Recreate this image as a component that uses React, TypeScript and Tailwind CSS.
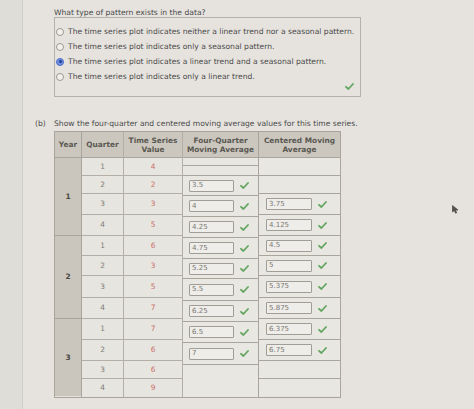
import React from "react";

const options = [
  "The time series plot indicates neither a linear trend nor a seasonal pattern.",
  "The time series plot indicates only a seasonal pattern.",
  "The time series plot indicates a linear trend and a seasonal pattern.",
  "The time series plot indicates only a linear trend.",
];

// quarter rows, top to bottom
const rows = [
  { q: 1, v: 4, h: 18, cma: "" },
  { q: 2, v: 2, h: 18, cma: "" },
  { q: 3, v: 3, h: 21, cma: "3.75" },
  { q: 4, v: 5, h: 21, cma: "4.125" },
  { q: 1, v: 6, h: 20, cma: "4.5" },
  { q: 2, v: 3, h: 20, cma: "5" },
  { q: 3, v: 5, h: 22, cma: "5.375" },
  { q: 4, v: 7, h: 21, cma: "5.875" },
  { q: 1, v: 7, h: 21, cma: "6.375" },
  { q: 2, v: 6, h: 21, cma: "6.75" },
  { q: 3, v: 6, h: 18, cma: "" },
  { q: 4, v: 9, h: 17, cma: "" },
];

// four-quarter column sits between the quarter rows
const fourQ = [
  { h: 8, val: "" },
  { h: 10, val: "" },
  { h: 20, val: "3.5" },
  { h: 21, val: "4" },
  { h: 21, val: "4.25" },
  { h: 21, val: "4.75" },
  { h: 20, val: "5.25" },
  { h: 22, val: "5.5" },
  { h: 21, val: "6.25" },
  { h: 21, val: "6.5" },
  { h: 22, val: "7" },
  { h: 32, val: "" },
];

const years = [
  { y: 1, h: 78 },
  { y: 2, h: 83 },
  { y: 3, h: 77 },
];

const Check = ({ className = "" }: { className?: string }) => (
  <svg width="9" height="7" viewBox="0 0 9 7" className={className}>
    <path d="M1 3.8 L3.4 6 L8 1" fill="none" stroke="#62a660" strokeWidth="1.8" strokeLinecap="round" strokeLinejoin="round" />
  </svg>
);

const Answer = ({ val, w }: { val: string; w: string }) => (
  <div className="flex items-center gap-[6px]">
    <div className={`${w} h-[12px] border border-[#a09d97] bg-[#eeede9] rounded-[1px] flex items-center pl-[2px] text-[7px] text-[#7a7873]`}>
      {val}
    </div>
    <Check />
  </div>
);

const Radio = ({ on }: { on: boolean }) =>
  on ? (
    <span className="w-[8px] h-[8px] rounded-full bg-[#6f8fe0] border border-[#4f6fc8] flex items-center justify-center shrink-0">
      <span className="w-[3px] h-[3px] rounded-full bg-[#1f3d99]" />
    </span>
  ) : (
    <span className="w-[8px] h-[8px] rounded-full bg-[#f1f0ec] border border-[#9a9892] shrink-0" />
  );

export default function App() {
  const cell = "border-b border-[#b3afa6] flex items-center justify-center";
  return (
    <div className="relative w-[474px] h-[409px] bg-[#e6e3de] flex overflow-hidden" style={{ fontFamily: "'DejaVu Sans', Verdana, sans-serif" }}>
      <div className="w-[23px] h-full bg-[#dfddd8] border-r border-[#d0cec9] shrink-0" />

      <div className="flex flex-col pl-[12px] pt-[8px]">
        <div className="pl-[19px] text-[7.6px] text-[#4a4a4a] leading-[9px]">What type of pattern exists in the data?</div>

        <div className="ml-[19px] w-[307px] h-[80px] border border-[#b4b1ab] flex flex-col pl-[1px] pt-[6px] relative">
          {options.map((o, i) => (
            <div key={i} className="flex items-center gap-[4px] h-[15px] text-[7.6px] text-[#4a4a4a]">
              <Radio on={i === 2} />
              <span>{o}</span>
            </div>
          ))}
          <Check className="absolute right-[6px] bottom-[6px]" />
        </div>

        <div className="flex items-center mt-[22px] text-[7.6px] text-[#4a4a4a] leading-[9px]">
          <span className="w-[19px]">(b)</span>
          <span>Show the four-quarter and centered moving average values for this time series.</span>
        </div>

        <div className="ml-[19px] mt-[3px] flex w-fit border border-[#a9a59c] text-[7.4px]">
          {/* Year */}
          <div className="w-[27px] flex flex-col border-r border-[#a9a59c]">
            <div className="h-[26px] bg-[#cbc7be] border-b border-[#a9a59c] flex items-center justify-center font-bold text-[#5a5852]">Year</div>
            {years.map((y, i) => (
              <div key={y.y} style={{ height: y.h }} className={`bg-[#cac6bd] flex items-center justify-center font-bold text-[#4a4843] ${i < 2 ? "border-b border-[#a9a59c]" : ""}`}>
                {y.y}
              </div>
            ))}
          </div>
          {/* Quarter */}
          <div className="w-[42px] flex flex-col border-r border-[#b3afa6]">
            <div className="h-[26px] bg-[#cbc7be] border-b border-[#a9a59c] flex items-center justify-center font-bold text-[#5a5852]">Quarter</div>
            {rows.map((r, i) => (
              <div key={i} style={{ height: r.h }} className={`${cell} bg-[#e7e5e0] text-[#7d7b76] ${i === rows.length - 1 ? "border-b-0" : ""}`}>
                {r.q}
              </div>
            ))}
          </div>
          {/* Time series value */}
          <div className="w-[59px] flex flex-col border-r border-[#b3afa6]">
            <div className="h-[26px] bg-[#cbc7be] border-b border-[#a9a59c] flex flex-col items-center justify-center font-bold text-[#5a5852] leading-[9px]">
              <span>Time Series</span>
              <span>Value</span>
            </div>
            {rows.map((r, i) => (
              <div key={i} style={{ height: r.h }} className={`${cell} bg-[#e7e5e0] text-[#c9706a] ${i === rows.length - 1 ? "border-b-0" : ""}`}>
                {r.v}
              </div>
            ))}
          </div>
          {/* Four-quarter moving average */}
          <div className="w-[76px] flex flex-col border-r border-[#a9a59c]">
            <div className="h-[26px] bg-[#cbc7be] border-b border-[#a9a59c] flex flex-col items-center justify-center font-bold text-[#5a5852] leading-[9px]">
              <span>Four-Quarter</span>
              <span>Moving Average</span>
            </div>
            {fourQ.map((f, i) => (
              <div key={i} style={{ height: f.h }} className={`border-b border-[#a9a59c] bg-[#e9e7e2] flex items-center pl-[6px] ${i === fourQ.length - 1 ? "border-b-0" : ""}`}>
                {f.val && <Answer val={f.val} w="w-[45px]" />}
              </div>
            ))}
          </div>
          {/* Centered moving average */}
          <div className="w-[81px] flex flex-col">
            <div className="h-[26px] bg-[#cbc7be] border-b border-[#a9a59c] flex flex-col items-center justify-center font-bold text-[#5a5852] leading-[9px]">
              <span>Centered Moving</span>
              <span>Average</span>
            </div>
            {rows.map((r, i) => (
              <div key={i} style={{ height: r.h }} className={`border-b border-[#a9a59c] bg-[#e9e7e2] flex items-center pl-[7px] ${i === rows.length - 1 ? "border-b-0" : ""}`}>
                {r.cma && <Answer val={r.cma} w="w-[46px]" />}
              </div>
            ))}
          </div>
        </div>
      </div>

      {/* mouse pointer */}
      <svg width="7" height="9" viewBox="0 0 7 9" className="absolute left-[452px] top-[205px]">
        <path d="M0.5 0.5 L0.5 7 L2.3 5.4 L3.6 8.3 L4.7 7.8 L3.5 5 L6 5 Z" fill="#55524c" stroke="#3c3a36" strokeWidth="0.6" />
      </svg>
    </div>
  );
}
